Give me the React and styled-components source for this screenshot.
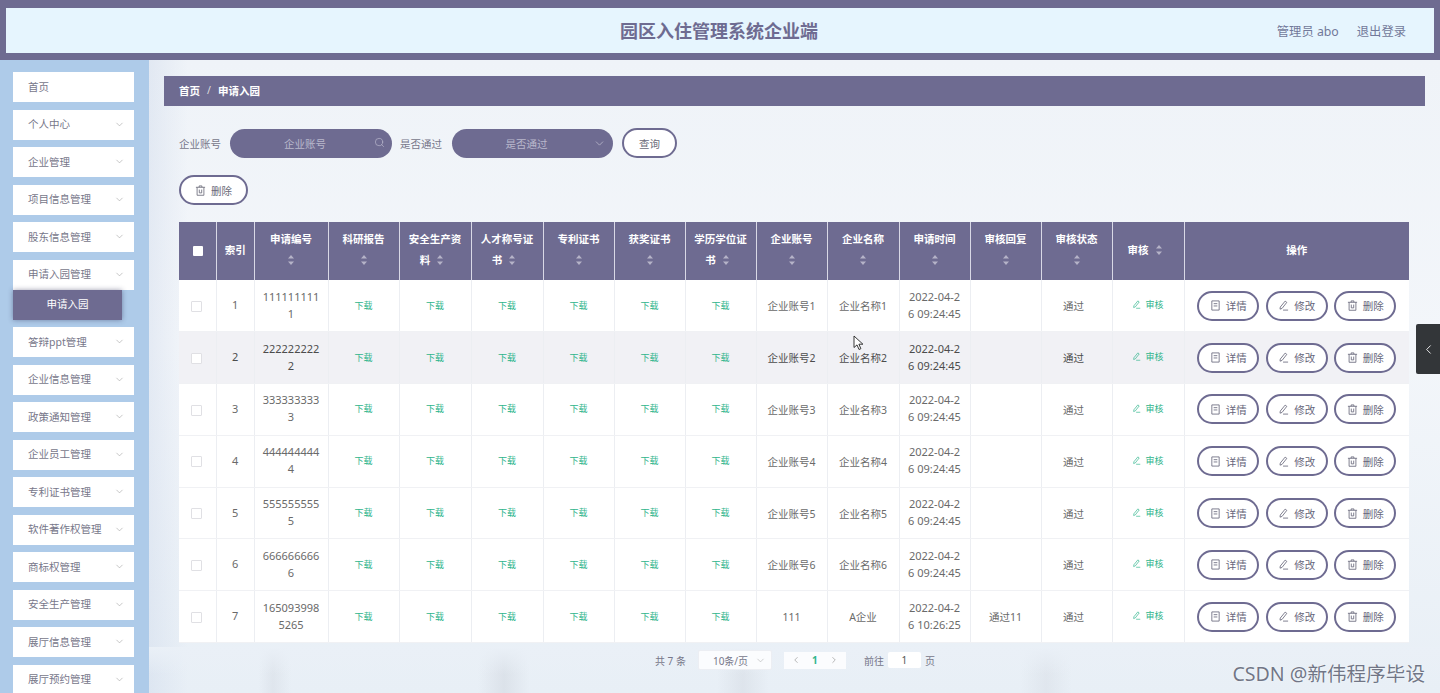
import React from "react";
import styled, {createGlobalStyle} from "styled-components";
import {ChevronDown, ChevronLeft, ChevronRight, Search} from "lucide-react";

const PURPLE = "#6e6b91";
const GREEN = "#2fb58c";
const TEXT = "#6a6a6a";

const navItems = [
    {name: "首页"},
    {name: "个人中心", arrow: true},
    {name: "企业管理", arrow: true},
    {name: "项目信息管理", arrow: true},
    {name: "股东信息管理", arrow: true},
    {name: "申请入园管理", arrow: true, child: "申请入园"},
    {name: "答辩ppt管理", arrow: true},
    {name: "企业信息管理", arrow: true},
    {name: "政策通知管理", arrow: true},
    {name: "企业员工管理", arrow: true},
    {name: "专利证书管理", arrow: true},
    {name: "软件著作权管理", arrow: true},
    {name: "商标权管理", arrow: true},
    {name: "安全生产管理", arrow: true},
    {name: "展厅信息管理", arrow: true},
    {name: "展厅预约管理", arrow: true},
];

const columns = [
    {w: 37.5},
    {w: 37.5, title: "索引"},
    {w: 74, title: "申请编号", sort: true},
    {w: 71, title: "科研报告", sort: true},
    {w: 72, title: "安全生产资料", sort: true},
    {w: 72, title: "人才称号证书", sort: true},
    {w: 71, title: "专利证书", sort: true},
    {w: 71, title: "获奖证书", sort: true},
    {w: 71, title: "学历学位证书", sort: true},
    {w: 71, title: "企业账号", sort: true},
    {w: 72, title: "企业名称", sort: true},
    {w: 71, title: "申请时间", sort: true},
    {w: 71, title: "审核回复", sort: true},
    {w: 71, title: "审核状态", sort: true},
    {w: 72, title: "审核", sort: true},
    {w: 225, title: "操作"},
];

const rows = [
    {no: "1111111111", account: "企业账号1", company: "企业名称1", time: "2022-04-26 09:24:45", reply: ""},
    {no: "2222222222", account: "企业账号2", company: "企业名称2", time: "2022-04-26 09:24:45", reply: "", hover: true},
    {no: "3333333333", account: "企业账号3", company: "企业名称3", time: "2022-04-26 09:24:45", reply: ""},
    {no: "4444444444", account: "企业账号4", company: "企业名称4", time: "2022-04-26 09:24:45", reply: ""},
    {no: "5555555555", account: "企业账号5", company: "企业名称5", time: "2022-04-26 09:24:45", reply: ""},
    {no: "6666666666", account: "企业账号6", company: "企业名称6", time: "2022-04-26 09:24:45", reply: ""},
    {no: "1650939985265", account: "111", company: "A企业", time: "2022-04-26 10:26:25", reply: "通过11"},
];

const TrashIcon = () => (
    <svg width="11" height="11" viewBox="0 0 12 12" fill="none" stroke="currentColor" strokeWidth="0.9">
        <path d="M1 2.5h10M4.5 2.5V1h3v1.5M2.3 2.5v8.7h7.4V2.5M4.7 5v3.6h2.6V5" />
    </svg>
);

const DocIcon = () => (
    <svg width="11" height="11" viewBox="0 0 12 12" fill="none" stroke="currentColor" strokeWidth="0.9">
        <path d="M2 1h8v10H2zM4 4h4M4 6.5h4" />
    </svg>
);

const EditIcon = () => (
    <svg width="11" height="11" viewBox="0 0 12 12" fill="none" stroke="currentColor" strokeWidth="0.9">
        <path d="M7.8 1.2l1.8 1.4-5.2 6.6-2.2.8.3-2.3zM5.5 11h5.5" />
    </svg>
);

const SortIcon = () => (
    <SortMark viewBox="0 0 20 12">
        <path d="M10 1l3 3.6H7zM10 11L7 7.4h6z" fill="currentColor" />
    </SortMark>
);

function App() {
    return (
        <Page>
            <GlobalStyle />
            <TopBar>
                <TopInner>
                    <Title>园区入住管理系统企业端</Title>
                    <TopRight>
                        <span>管理员 abo</span>
                        <span>退出登录</span>
                    </TopRight>
                </TopInner>
            </TopBar>

            <Body>
                <Sidebar>
                    {navItems.map((item) => (
                        <NavGroup key={item.name}>
                            <NavItem>
                                <span>{item.name}</span>
                                {item.arrow && <ChevronDown size={11} strokeWidth={1.2} color="#999" />}
                            </NavItem>
                            {item.child && <SubItem>{item.child}</SubItem>}
                        </NavGroup>
                    ))}
                </Sidebar>

                <Main>
                    <Breadcrumb>
                        <b>首页</b>
                        <Slash>/</Slash>
                        <b>申请入园</b>
                    </Breadcrumb>

                    <Filters>
                        <FilterLabel>企业账号</FilterLabel>
                        <PillInput>
                            企业账号
                            <PillIcon><Search size={11} strokeWidth={1.3} /></PillIcon>
                        </PillInput>
                        <FilterLabel>是否通过</FilterLabel>
                        <PillSelect>
                            是否通过
                            <PillIcon><ChevronDown size={13} strokeWidth={1.3} /></PillIcon>
                        </PillSelect>
                        <OutlineButton $width={55}>查询</OutlineButton>
                    </Filters>

                    <Actions>
                        <OutlineButton $width={69}><TrashIcon />删除</OutlineButton>
                    </Actions>

                    <Table>
                        <colgroup>
                            {columns.map((c, i) => <col key={i} style={{width: c.w}} />)}
                        </colgroup>
                        <thead>
                            <tr>
                                <HeadCell><HeadCheck /></HeadCell>
                                {columns.slice(1).map((c) => (
                                    <HeadCell key={c.title}>
                                        {c.title}{c.sort && <SortIcon />}
                                    </HeadCell>
                                ))}
                            </tr>
                        </thead>
                        <tbody>
                            {rows.map((r, i) => (
                                <Row key={r.no} $hover={r.hover}>
                                    <Cell><RowCheck /></Cell>
                                    <Cell>{i + 1}</Cell>
                                    <Cell>{r.no}</Cell>
                                    {[0, 1, 2, 3, 4, 5].map((n) => (
                                        <Cell key={n}><Download>下载</Download></Cell>
                                    ))}
                                    <SmallCell>{r.account}</SmallCell>
                                    <SmallCell>{r.company}</SmallCell>
                                    <Cell>{r.time}</Cell>
                                    <SmallCell>{r.reply}</SmallCell>
                                    <StatusCell>通过</StatusCell>
                                    <Cell><Review><EditIcon />审核</Review></Cell>
                                    <Cell>
                                        <RowButtons>
                                            <RowButton><DocIcon />详情</RowButton>
                                            <RowButton><EditIcon />修改</RowButton>
                                            <RowButton><TrashIcon />删除</RowButton>
                                        </RowButtons>
                                    </Cell>
                                </Row>
                            ))}
                        </tbody>
                    </Table>

                    <Pagination>
                        <span>共 7 条</span>
                        <PageSize>10条/页<ChevronDown size={11} strokeWidth={1.2} color="#aaa" /></PageSize>
                        <Pager>
                            <ChevronLeft size={10} color="#aaa" />
                            <CurrentPage>1</CurrentPage>
                            <ChevronRight size={10} color="#aaa" />
                        </Pager>
                        <GoTo>
                            前往<PageInput>1</PageInput>页
                        </GoTo>
                    </Pagination>
                </Main>
            </Body>

            <SideToggle><ChevronLeft size={15} strokeWidth={1.4} /></SideToggle>
            <Pointer viewBox="0 0 12 16" width="12" height="16">
                <path d="M1 1v11.5l3-2.6 2 4.6 1.9-.8-2-4.5h4z" fill="#fff" stroke="#222" strokeWidth="0.9" />
            </Pointer>
            <Watermark>CSDN @新伟程序毕设</Watermark>
        </Page>
    );
}

export default App;

const GlobalStyle = createGlobalStyle`
    html, body {
        margin: 0;
        padding: 0;
    }

    body {
        font-family: "Noto Sans", "Noto Sans CJK SC", sans-serif;
        overflow: hidden;
    }
`;

const Page = styled.div`
    position: relative;
    width: 1440px;
    height: 693px;
    overflow: hidden;
`;

const TopBar = styled.header`
    height: 60px;
    box-sizing: border-box;
    padding: 8px 6px 7px;
    background: ${PURPLE};
`;

const TopInner = styled.div`
    position: relative;
    height: 45px;
    display: flex;
    align-items: center;
    justify-content: center;
    background: #e6f5fe;
`;

const Title = styled.h1`
    margin: 0 2px 2px 0;
    font-size: 18px;
    font-weight: 700;
    color: ${PURPLE};
`;

const TopRight = styled.div`
    position: absolute;
    right: 28px;
    top: 15px;
    display: flex;
    gap: 18px;
    font-size: 12.3px;
    line-height: 18px;
    color: #72799a;
`;

const Body = styled.div`
    display: flex;
    height: 633px;
`;

const Sidebar = styled.nav`
    width: 149px;
    flex-shrink: 0;
    box-sizing: border-box;
    padding: 12px 15px 0 13px;
    display: flex;
    flex-direction: column;
    gap: 7.5px;
    background: #aecbe9;
`;

const NavGroup = styled.div`
    flex-shrink: 0;
`;

const NavItem = styled.div`
    height: 30px;
    box-sizing: border-box;
    padding: 0 9px 2px 15px;
    display: flex;
    align-items: center;
    justify-content: space-between;
    background: #fff;
    font-size: 10.5px;
    color: #77778a;

    svg {
        margin-top: 1px;
    }
`;

const SubItem = styled.div`
    width: 109px;
    height: 30px;
    padding-bottom: 2px;
    box-sizing: border-box;
    display: flex;
    align-items: center;
    justify-content: center;
    background: ${PURPLE};
    box-shadow: 0 0 5px rgba(40, 40, 80, 0.45);
    font-size: 10.5px;
    color: #fff;
`;

const Main = styled.main`
    flex: 1;
    box-sizing: border-box;
    padding: 16px 15px 0;
    background:
        linear-gradient(180deg, #eaf0f7 0%, rgba(234, 240, 247, 0) 60%) bottom / 100% 46px no-repeat,
        linear-gradient(90deg,
            transparent 8.5%, rgba(190, 195, 205, 0.22) 9.6%, transparent 11%,
            transparent 25.5%, rgba(190, 195, 205, 0.3) 27.5%, transparent 29.5%,
            transparent 44%, rgba(190, 195, 205, 0.25) 46%, transparent 48%,
            transparent 67.5%, rgba(190, 195, 205, 0.2) 69.5%, transparent 71.5%) bottom / 100% 46px no-repeat,
        linear-gradient(90deg, rgba(200, 212, 232, 0.35) 0, transparent 3%),
        linear-gradient(180deg, #eff3f8 0%, #f3f6fa 45%, #e8eff6 100%);
`;

const Breadcrumb = styled.div`
    height: 30px;
    box-sizing: border-box;
    padding: 0 0 2px 15px;
    display: flex;
    align-items: center;
    background: ${PURPLE};
    font-size: 10.5px;
    color: #fff;
`;

const Slash = styled.span`
    margin: 0 7px;
    color: #ddd;
`;

const Filters = styled.div`
    margin-top: 22px;
    padding-left: 15px;
    height: 30px;
    display: flex;
    align-items: center;
`;

const FilterLabel = styled.label`
    width: 42px;
    font-size: 10.5px;
    white-space: nowrap;
    color: #77778a;
`;

const PillInput = styled.div`
    position: relative;
    width: 162px;
    height: 29px;
    margin: 0 8px 0 9px;
    padding-right: 12px;
    box-sizing: border-box;
    display: flex;
    align-items: center;
    justify-content: center;
    border-radius: 15px;
    background: ${PURPLE};
    font-size: 10.5px;
    color: #b9b8cc;
`;

const PillSelect = styled(PillInput)`
    width: 161px;
    margin: 0 9px 0 10px;
`;

const PillIcon = styled.span`
    position: absolute;
    right: 7px;
    top: 8px;
    display: flex;
    color: #c4c3d4;
`;

const OutlineButton = styled.button`
    width: ${(p) => p.$width}px;
    height: 30px;
    padding: 0;
    display: inline-flex;
    align-items: center;
    justify-content: center;
    gap: 5px;
    box-sizing: border-box;
    border: 2px solid ${PURPLE};
    border-radius: 15px;
    background: #fff;
    font-family: inherit;
    font-size: 10.5px;
    color: #6a6a78;
`;

const Actions = styled.div`
    margin-top: 17px;
    padding-left: 15px;
    height: 30px;
    display: flex;
`;

const Table = styled.table`
    width: 1230px;
    margin: 17px 0 0 15px;
    table-layout: fixed;
    border-collapse: collapse;
    background: #fff;
`;

const HeadCell = styled.th`
    height: 58px;
    padding: 0 7px 2px;
    box-sizing: border-box;
    border-right: 1px solid #d9d8e6;
    background: ${PURPLE};
    font-size: 10.5px;
    font-weight: 700;
    line-height: 21px;
    color: #fff;

    &:last-child {
        border-right: none;
    }
`;

const SortMark = styled.svg`
    width: 20px;
    height: 12px;
    vertical-align: -2px;
    color: #b5b3c8;
`;

const HeadCheck = styled.span`
    display: inline-block;
    width: 10px;
    height: 10px;
    border-radius: 1px;
    background: #fff;
    vertical-align: middle;
`;

const Row = styled.tr`
    background: ${(p) => (p.$hover ? "#f1f1f5" : "#fff")};
    color: ${(p) => (p.$hover ? "#4c4c4c" : TEXT)};
`;

const Cell = styled.td`
    height: 51.8px;
    padding: 0 8px 2px;
    box-sizing: border-box;
    border-right: 1px solid #eceef2;
    border-bottom: 1px solid #f0f1f4;
    font-size: 11px;
    line-height: 17px;
    text-align: center;
    word-break: break-all;

    &:last-child {
        border-right: none;
    }
`;

const SmallCell = styled(Cell)`
    padding: 2px 8px 0;
    font-size: 10.5px;
`;

const StatusCell = styled(SmallCell)`
    padding-right: 14px;
`;

const RowCheck = styled.span`
    display: inline-block;
    width: 9px;
    height: 9px;
    margin-right: 2px;
    border: 1px solid #e0e0e4;
    border-radius: 1px;
    background: #fff;
    vertical-align: middle;
`;

const Download = styled.span`
    font-size: 9px;
    color: ${GREEN};
`;

const Review = styled.span`
    display: inline-flex;
    align-items: center;
    gap: 4px;
    font-size: 9px;
    color: ${GREEN};
    white-space: nowrap;

    svg {
        width: 9px;
        height: 9px;
    }
`;

const RowButtons = styled.div`
    margin-top: 2px;
    display: flex;
    justify-content: center;
    gap: 6.5px;
`;

const RowButton = styled(OutlineButton)`
    width: 62px;
    flex-shrink: 0;
    color: #66667a;
`;

const Pagination = styled.div`
    margin-top: 6px;
    padding-left: 491px;
    height: 22px;
    display: flex;
    align-items: center;
    font-size: 10px;
    color: #77778a;
`;

const PageSize = styled.div`
    width: 74px;
    height: 20px;
    margin: 0 12px;
    padding: 0 5px 0 14px;
    box-sizing: border-box;
    display: flex;
    align-items: center;
    justify-content: space-between;
    background: #fbfcfe;
    border: 1px solid #eceef3;
    border-radius: 2px;
`;

const Pager = styled.div`
    width: 62px;
    height: 17px;
    padding: 0 7px;
    box-sizing: border-box;
    display: flex;
    align-items: center;
    justify-content: space-between;
    background: #fbfcfe;
`;

const CurrentPage = styled.b`
    color: ${GREEN};
`;

const GoTo = styled.div`
    margin-left: 18px;
    display: flex;
    align-items: center;
`;

const PageInput = styled.div`
    width: 33px;
    height: 16px;
    margin: 0 4px;
    display: flex;
    align-items: center;
    justify-content: center;
    background: #fff;
    border-radius: 2px;
    color: #555;
`;

const SideToggle = styled.div`
    position: absolute;
    top: 324px;
    right: 0;
    width: 24px;
    height: 50px;
    display: flex;
    align-items: center;
    justify-content: center;
    background: #333639;
    border-radius: 2px 0 0 2px;
    color: #fff;
`;

const Pointer = styled.svg`
    position: absolute;
    left: 853px;
    top: 335px;
`;

const Watermark = styled.div`
    position: absolute;
    right: 15px;
    bottom: 7px;
    font-size: 19.6px;
    line-height: 24px;
    color: rgba(70, 75, 95, 0.75);
    text-shadow: 0 0 2px rgba(255, 255, 255, 0.7);
`;
